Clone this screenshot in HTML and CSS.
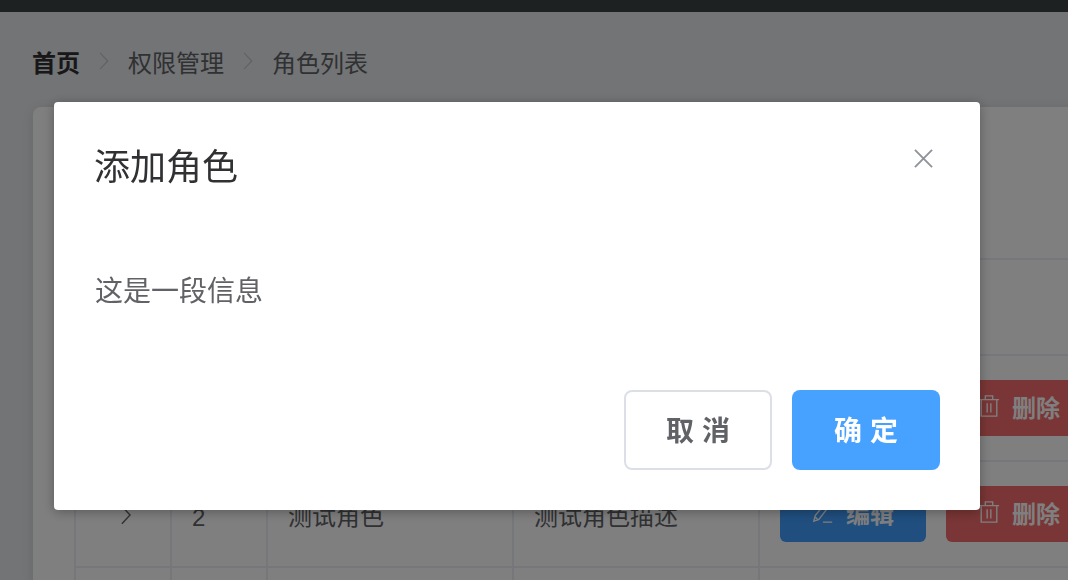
FILE: index.html
```html
<!DOCTYPE html>
<html>
<head>
	<meta charset="UTF-8">
	<title>角色列表</title>
	<link rel="stylesheet" href="styles.css">
</head>
<body>
	<div class="topbar"></div>
	<div class="main">
		<div class="crumb">
			<span class="crumb-home">首页</span>
			<svg class="crumb-sep" viewBox="0 0 12 22"><path d="M1.5 1.5 10.5 11 1.5 20.5"/></svg>
			<span>权限管理</span>
			<svg class="crumb-sep" viewBox="0 0 12 22"><path d="M1.5 1.5 10.5 11 1.5 20.5"/></svg>
			<span>角色列表</span>
		</div>
		<div class="card">
			<div class="table">
				<div class="row row-head">
					<div class="cell"></div>
					<div class="cell">#</div>
					<div class="cell">角色名称</div>
					<div class="cell">角色描述</div>
					<div class="cell">操作</div>
				</div>
				<div class="row">
					<div class="cell cell-arrow"><svg class="arrow" viewBox="0 0 11 22"><path d="M1 1.500 10 11 1 20.500"/></svg></div>
					<div class="cell cell-num">1</div>
					<div class="cell">测试角色</div>
					<div class="cell">测试角色描述</div>
					<div class="cell cell-btns">
						<a class="btn btn-edit"><svg class="btn-icon" viewBox="0 0 24 24"><path d="M2 22l1.500-6L14 3l4 3.500L7.500 20zM3 17l4 4M12 23h10"/></svg>编辑</a>
						<a class="btn btn-del"><svg class="btn-icon" viewBox="0 0 24 24"><path d="M1 5h22M8 5V1h8v4M3.500 5v18h17V5M10 9v10M14 9v10"/></svg>删除</a>
					</div>
				</div>
				<div class="row">
					<div class="cell cell-arrow"><svg class="arrow" viewBox="0 0 11 22"><path d="M1 1.500 10 11 1 20.500"/></svg></div>
					<div class="cell cell-num">2</div>
					<div class="cell">测试角色</div>
					<div class="cell">测试角色描述</div>
					<div class="cell cell-btns">
						<a class="btn btn-edit"><svg class="btn-icon" viewBox="0 0 24 24"><path d="M2 22l1.500-6L14 3l4 3.500L7.500 20zM3 17l4 4M12 23h10"/></svg>编辑</a>
						<a class="btn btn-del"><svg class="btn-icon" viewBox="0 0 24 24"><path d="M1 5h22M8 5V1h8v4M3.500 5v18h17V5M10 9v10M14 9v10"/></svg>删除</a>
					</div>
				</div>
				<div class="row">
					<div class="cell"></div>
					<div class="cell"></div>
					<div class="cell"></div>
					<div class="cell"></div>
					<div class="cell"></div>
				</div>
			</div>
		</div>
	</div>

	<div class="overlay">
		<div class="dialog">
			<div class="dialog-head">添加角色</div>
			<svg class="dialog-close" viewBox="0 0 20 20"><path d="M1 1 19 19M19 1 1 19"/></svg>
			<div class="dialog-body">这是一段信息</div>
			<div class="dialog-foot">
				<button class="dbtn dbtn-plain">取消</button>
				<button class="dbtn dbtn-primary">确定</button>
			</div>
		</div>
	</div>
</body>
</html>
```

FILE: styles.css
```css
html,body{
	height: 100%;
	overflow: hidden;
}
body{
	margin: 0;
	background-color: #e6e8eb;
	font-family: "Liberation Sans", "Noto Sans CJK SC", sans-serif;
	color: #606266;
}
.topbar{
	height: 12px;
	background-color: #3a4245;
}
.main{
	padding: 0 0 0 32px;
}
.crumb{
	display: flex;
	align-items: center;
	height: 36px;
	margin-top: 31px;
	font-size: 24px;
	color: #606266;
}
.crumb-home{
	font-weight: bold;
	color: #303133;
}
.crumb-sep{
	width: 10px;
	height: 20px;
	margin: 0 19px;
	fill: none;
	stroke: #c0c4cc;
	stroke-width: 1.5;
}
.card{
	width: 1100px;
	margin: 28px 0 0 1px;
	padding: 151px 0 0 41px;
	background-color: #fff;
	border-radius: 8px;
	box-shadow: 0 2px 12px rgba(0,0,0,.1);
}
.table{
	border-top: 2px solid #ebeef5;
	border-left: 2px solid #ebeef5;
	font-size: 24px;
}
.row{
	display: grid;
	grid-template-columns: 96px 96px 246px 246px 340px;
	height: 106px;
	border-bottom: 2px solid #ebeef5;
	box-sizing: border-box;
}
.row-head{
	height: 96px;
}
.cell{
	display: flex;
	align-items: center;
	padding-left: 20px;
	border-right: 2px solid #ebeef5;
}
.cell-arrow{
	padding: 2px 0 0 5px;
	justify-content: center;
}
.cell-num{
	padding-top: 8px;
}
.arrow{
	width: 10px;
	height: 20px;
	fill: none;
	stroke: #606266;
	stroke-width: 1.6;
}
.cell-btns{
	gap: 20px;
}
.btn{
	display: flex;
	align-items: center;
	justify-content: center;
	box-sizing: border-box;
	width: 146px;
	height: 56px;
	padding-bottom: 4px;
	border-radius: 6px;
	font-weight: bold;
	color: #fff;
}
.btn-edit{
	background-color: #409eff;
}
.btn-del{
	background-color: #f56c6c;
}
.btn-icon{
	width: 22px;
	height: 22px;
	margin-right: 12px;
	fill: none;
	stroke: #fff;
	stroke-width: 1.5;
}
.overlay{
	position: fixed;
	top: 0;
	right: 0;
	bottom: 0;
	left: 0;
	background-color: rgba(0,0,0,.5);
}
.dialog{
	position: relative;
	box-sizing: border-box;
	width: 926px;
	height: 408px;
	margin: 102px 0 0 54px;
	background-color: #fff;
	border-radius: 4px;
	box-shadow: 0 2px 12px rgba(0,0,0,.3);
}
.dialog-head{
	padding: 42px 40px 18px;
	font-size: 36px;
	line-height: 48px;
	color: #303133;
}
.dialog-close{
	position: absolute;
	top: 47px;
	right: 47px;
	width: 19px;
	height: 19px;
	fill: none;
	stroke: #909399;
	stroke-width: 2;
}
.dialog-body{
	padding: 62px 41px 58px;
	font-size: 28px;
	line-height: 40px;
	color: #606266;
}
.dialog-foot{
	display: flex;
	justify-content: flex-end;
	gap: 20px;
	padding: 20px 40px 40px;
}
.dbtn{
	width: 148px;
	height: 80px;
	padding: 0 0 2px 8px;
	border-radius: 8px;
	font-family: inherit;
	font-size: 28px;
	font-weight: bold;
	letter-spacing: 8px;
}
.dbtn-plain{
	background-color: #fff;
	border: 2px solid #dcdfe6;
	color: #606266;
}
.dbtn-primary{
	background-color: #46a1ff;
	border: none;
	color: #fff;
}
```
